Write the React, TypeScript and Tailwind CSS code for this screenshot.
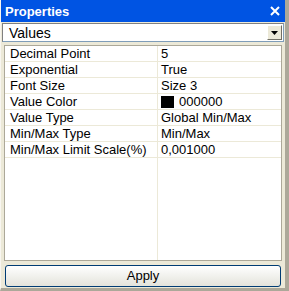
import React from "react";

const rows: [string, React.ReactNode][] = [
  ["Decimal Point", "5"],
  ["Exponential", "True"],
  ["Font Size", "Size 3"],
  [
    "Value Color",
    <span className="flex items-center gap-[5px]">
      <span className="inline-block w-[13px] h-[12px] bg-black" />
      <span>000000</span>
    </span>,
  ],
  ["Value Type", "Global Min/Max"],
  ["Min/Max Type", "Min/Max"],
  ["Min/Max Limit Scale(%)", "0,001000"],
];

export default function App() {
  return (
    <div
      className="w-[289px] h-[291px] bg-[#ECE9D8] flex flex-col overflow-hidden"
      style={{ fontFamily: '"Liberation Sans", Arial, sans-serif' }}
    >
      <div className="flex-1 flex flex-col border-l border-l-[#F8F6F0] border-r-[4px] border-r-[#ACA899] border-b-[3px] border-b-[#ACA899]">
        {/* title bar */}
        <div className="h-[22px] bg-[#0054E3] flex items-center justify-between pl-[4px] pr-[3px]">
          <span className="text-white font-bold text-[13px] leading-none">Properties</span>
          <svg width="10" height="10" viewBox="0 0 10 10" className="mr-[2px]">
            <path d="M1 1 L9 9 M9 1 L1 9" stroke="white" strokeWidth="2" />
          </svg>
        </div>
        {/* combo */}
        <div className="mx-[1px] mt-[1px] h-[19px] bg-white border border-[#7F9DB9] border-t-[#808080] border-l-[#808080] flex items-center justify-between">
          <span className="pl-[6px] text-[14px] text-black leading-none">Values</span>
          <div className="w-[15px] h-[15px] mr-[1px] bg-[#ECE9D8] border border-t-white border-l-white border-r-[#716F64] border-b-[#716F64] flex items-center justify-center">
            <svg width="7" height="4" viewBox="0 0 7 4">
              <path d="M0 0 H7 L3.5 4 Z" fill="black" />
            </svg>
          </div>
        </div>
        {/* grid */}
        <div className="mt-[3px] mx-[3px] flex-1 bg-white border border-[#ACA899] flex">
          <div className="w-[153px] border-r border-[#ECE9D8] flex flex-col">
            {rows.map(([k]) => (
              <div
                key={k}
                className="h-[16px] border-b border-[#ECE9D8] pl-[5px] text-[13px] leading-[15px] text-black whitespace-nowrap"
              >
                {k}
              </div>
            ))}
          </div>
          <div className="flex-1 flex flex-col">
            {rows.map(([k, v]) => (
              <div
                key={k}
                className="h-[16px] border-b border-[#ECE9D8] pl-[3px] text-[13px] leading-[15px] text-black whitespace-nowrap flex items-center"
              >
                {v}
              </div>
            ))}
          </div>
        </div>
        {/* apply */}
        <div className="px-[4px] pt-[2px] pb-[1px]">
          <button className="w-full h-[22px] rounded-[3px] border border-[#003C74] bg-gradient-to-b from-[#FFFFFF] to-[#E3E3DB] text-[13px] text-black leading-none">
            Apply
          </button>
        </div>
      </div>
    </div>
  );
}
